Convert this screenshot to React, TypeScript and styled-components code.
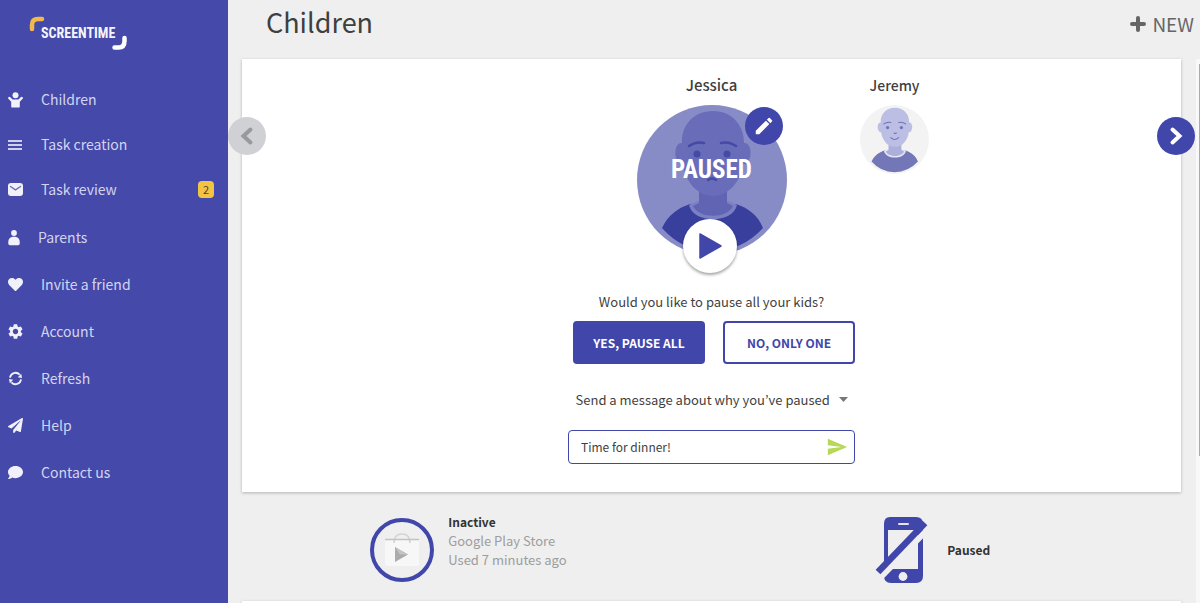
import React from 'react';
import styled, { createGlobalStyle } from 'styled-components';
import { MdSettings, MdEdit, MdSend } from 'react-icons/md';
import { FaHeart, FaPaperPlane, FaComment } from 'react-icons/fa';

const color = {
  brand: '#4146aa',
  sidebar: '#4549aa',
  page: '#efefef',
  text: '#3f3f3f',
  muted: '#9d9d9d',
};

const displayFont = '"Roboto Condensed", "Noto Sans CJK KR", sans-serif';

const GlobalStyle = createGlobalStyle`
  *, *::before, *::after { box-sizing: border-box; }
  body {
    margin: 0;
    background: ${color.page};
    color: ${color.text};
    font-family: "Noto Sans CJK KR", "Noto Sans", sans-serif;
    font-size: 13px;
    line-height: 19px;
  }
  button, input, select { font: inherit; color: inherit; margin: 0; }
  button { cursor: pointer; }
  svg { display: block; }
`;

const Shell = styled.div`
  display: flex;
  height: 100vh;
  overflow: hidden;
`;

/* Sidebar */

const Sidebar = styled.aside`
  flex: 0 0 228px;
  background: ${color.sidebar};
  color: #d3d5f0;
`;

const Brand = styled.a`
  display: flex;
  align-items: center;
  position: relative;
  width: 98px;
  height: 34px;
  margin: 16px 0 27px 29px;
  padding-left: 12px;
  color: #f4f4fc;
  font-family: ${displayFont};
  font-size: 14px;
  font-weight: 700;
  text-decoration: none;
`;

const BrandCorners = styled.svg`
  position: absolute;
  inset: 0;
`;

const NavList = styled.ul<{ $row: number }>`
  margin: 0 0 2px;
  padding: 0;
  list-style: none;
  li { height: ${(p) => p.$row}px; }
`;

const NavLink = styled.a`
  display: flex;
  align-items: center;
  gap: 18px;
  height: 100%;
  padding: 0 14px 0 8px;
  color: inherit;
  font-size: 14px;
  text-decoration: none;
  svg { flex: none; color: #f1f1fb; }
`;

const Badge = styled.span`
  margin-left: auto;
  width: 16px;
  height: 17px;
  border-radius: 4px;
  background: #f2c443;
  color: #4c4427;
  font-size: 11px;
  line-height: 17px;
  text-align: center;
`;

/* Main column */

const Main = styled.main`
  flex: 1;
  min-width: 0;
  display: flex;
  flex-direction: column;
`;

const Header = styled.header`
  flex: none;
  display: flex;
  align-items: flex-start;
  justify-content: space-between;
  height: 59px;
  padding: 4px 6px 0 38px;
`;

const Title = styled.h1`
  margin: 0;
  font-size: 27px;
  font-weight: 400;
  line-height: 36px;
`;

const NewButton = styled.button`
  display: flex;
  align-items: center;
  gap: 6px;
  padding: 0;
  border: 0;
  background: none;
  color: #666;
  font-size: 19px;
  line-height: 40px;
`;

const Scroller = styled.div`
  flex: 1;
  display: flex;
  min-height: 0;
`;

const Content = styled.div`
  flex: 1;
  min-width: 0;
  padding: 0 15px 0 14px;
`;

const Track = styled.div`
  flex: 0 0 4px;
  display: flex;
  justify-content: flex-end;
  background: #f8f8f8;
`;

const Thumb = styled.div`
  width: 1px;
  height: 72%;
  margin-top: 5px;
  background: #aaa;
`;

const Card = styled.section`
  position: relative;
  min-height: 120px;
  background: #fff;
  box-shadow: 0 1px 3px rgba(0, 0, 0, 0.25);
`;

const ChildCard = styled(Card)`
  display: flex;
  flex-direction: column;
  align-items: center;
  padding: 16px 0 28px;
`;

const ArrowButton = styled.button<{ $side: 'left' | 'right' }>`
  position: absolute;
  top: 58px;
  ${(p) => p.$side}: -14px;
  display: grid;
  place-items: center;
  width: 38px;
  height: 38px;
  padding: 0;
  border: 0;
  border-radius: 50%;
  background: ${color.brand};
  color: #fff;
  &:disabled { background: #cfd1d4; color: #97999c; }
`;

const Slides = styled.div`
  display: grid;
  grid-template-columns: repeat(3, 183px);
  justify-content: center;
  height: 200px;
`;

const Slide = styled.div<{ $column: number }>`
  grid-column: ${(p) => p.$column};
  display: flex;
  flex-direction: column;
  align-items: center;
`;

const ChildName = styled.h2<{ $active?: boolean }>`
  margin: 0 0 10px;
  font-size: ${(p) => (p.$active ? 15 : 14)}px;
  font-weight: 500;
  line-height: 20px;
`;

const AvatarFrame = styled.div<{ $size: number }>`
  position: relative;
  width: ${(p) => p.$size}px;
  height: ${(p) => p.$size}px;
`;

const PausedLabel = styled.span`
  position: absolute;
  inset: 50px 0 auto;
  color: #fff;
  font-family: ${displayFont};
  font-size: 25px;
  font-weight: 700;
  line-height: 30px;
  text-align: center;
`;

const EditButton = styled.button`
  position: absolute;
  top: 2px;
  right: 4px;
  display: grid;
  place-items: center;
  width: 38px;
  height: 38px;
  padding: 0;
  border: 0;
  border-radius: 50%;
  background: ${color.brand};
  color: #fff;
`;

const PlayButton = styled.button`
  position: absolute;
  left: 46px;
  top: 114px;
  display: grid;
  place-items: center;
  width: 54px;
  height: 54px;
  padding: 0;
  border: 0;
  border-radius: 50%;
  background: #fff;
  color: ${color.brand};
  box-shadow: 0 2px 3px rgba(0, 0, 0, 0.35);
`;

const PausePanel = styled.form`
  display: flex;
  flex-direction: column;
  align-items: center;
  width: 287px;
  margin-top: 17px;
`;

const Question = styled.p`
  margin: 0 0 10px;
`;

const Choices = styled.div`
  align-self: flex-end;
  display: flex;
  gap: 18px;
`;

const ChoiceButton = styled.button<{ $primary?: boolean }>`
  width: 132px;
  height: 43px;
  padding: 0;
  border: 2px solid ${color.brand};
  border-radius: 4px;
  background: ${(p) => (p.$primary ? color.brand : '#fff')};
  color: ${(p) => (p.$primary ? '#fff' : color.brand)};
  font-size: 12px;
  font-weight: 700;
`;

const ReasonField = styled.label`
  display: flex;
  align-items: center;
  gap: 8px;
  margin: 25px 0 21px;
  svg { color: #777; }
`;

const ReasonSelect = styled.select`
  height: 20px;
  padding: 0;
  border: 0;
  background: none;
  appearance: none;
`;

const MessageBox = styled.div`
  display: flex;
  align-items: center;
  width: 100%;
  height: 34px;
  padding: 0 6px 0 12px;
  border: 1px solid ${color.brand};
  border-radius: 4px;
`;

const MessageInput = styled.input`
  flex: 1;
  min-width: 0;
  height: 20px;
  padding: 0 0 2px;
  border: 0;
  outline: 0;
  background: none;
  font-size: 12px;
`;

const SendButton = styled.button`
  padding: 0;
  border: 0;
  background: none;
  color: #b5d957;
`;

/* Status strip */

const StatusRow = styled.section`
  display: grid;
  grid-template-columns: 1fr 1fr;
  justify-items: center;
  height: 109px;
  padding: 20px 18px 15px 0;
`;

const Status = styled.div<{ $gap: number }>`
  display: flex;
  align-items: center;
  gap: ${(p) => p.$gap}px;
`;

const AppRing = styled.div`
  display: grid;
  place-items: center;
  width: 64px;
  height: 64px;
  border: 4px solid ${color.brand};
  border-radius: 50%;
`;

const StatusText = styled.div`
  min-width: 126px;
  padding-bottom: 18px;
  color: ${color.muted};
  p { margin: 0; }
`;

const StatusLabel = styled.strong`
  display: block;
  color: #333;
  font-size: 12px;
`;

/* Drawings */

type Palette = {
  back: string; skin: string; neck: string; shirt: string; collar: string; line: string;
};

const pausedPalette: Palette = {
  back: '#888cc6', skin: '#686cb9', neck: '#6064b3', shirt: '#393f9d', collar: '#7b7fc3', line: '#444aa5',
};
const calmPalette: Palette = {
  back: '#f3f3f3', skin: '#bcbee4', neck: '#acafdb', shirt: '#7377b7', collar: '#e3e4f4', line: '#6f74b5',
};

const Portrait = ({ size, palette, smiling }: { size: number; palette: Palette; smiling?: boolean }) => (
  <svg width={size} height={size} viewBox="0 0 150 150" aria-hidden="true">
    <circle cx="75" cy="75" r="75" fill={palette.back} />
    <path d="M25 123C31 110 41 103 53 99Q76 108 99 99C111 103 121 110 126 123Q105 146 75 146T25 123Z" fill={palette.shirt} />
    <path d="M52 100C56 119 96 119 100 100L91 96H61Z" fill={palette.collar} />
    <path d="M62 84H90V98L96 101C90 114 62 114 56 101L62 98Z" fill={palette.neck} />
    <path d="M76 6C96 6 107 21 107 38C114 37 115 50 112 55Q110 60 106 59C104 76 92 91 76 91S48 76 46 59Q42 60 40 55C37 50 38 37 45 38C44 21 56 6 76 6Z" fill={palette.skin} />
    <g fill="none" stroke={palette.line} strokeWidth="2.5" strokeLinecap="round">
      <path d="M52 41Q59 36 67 38M84 38Q92 36 99 41" />
      {smiling ? (
        <path d="M67 71Q75 79 84 71M74 61Q76 63 79 61" />
      ) : (
        <path d="M71 75Q75 72 79 75" />
      )}
    </g>
    <circle cx="60" cy="49" r="3.5" fill={palette.line} />
    <circle cx="90" cy="49" r="3.5" fill={palette.line} />
  </svg>
);

const ChildIcon = () => (
  <svg width="15" height="16" viewBox="0 0 15 16" fill="currentColor" aria-hidden="true">
    <circle cx="7.5" cy="3.2" r="3" />
    <path d="M.4 5.2Q1.4 4.3 2.3 5.3L4.6 7.4H10.4L12.7 5.3Q13.6 4.3 14.6 5.2T14.4 7L11.8 9.7V14.4Q11.8 15.6 10.6 15.6H4.4Q3.2 15.6 3.2 14.4V9.7L.6 7Q-.3 6 .4 5.2Z" />
  </svg>
);

const BarsIcon = () => (
  <svg width="15" height="12" viewBox="0 0 15 12" fill="currentColor" aria-hidden="true">
    <path d="M0 1H14V3H0ZM0 5H14V7H0ZM0 9H14V11H0Z" opacity=".8" />
  </svg>
);

const MailIcon = () => (
  <svg width="15" height="13" viewBox="0 0 15 13" aria-hidden="true">
    <rect width="15" height="13" rx="3" fill="currentColor" />
    <path d="M2.5 3.5L7.5 6.8L12.5 3.5" fill="none" stroke="#6d70b4" strokeWidth="1.4" strokeLinecap="round" />
  </svg>
);

const ParentIcon = () => (
  <svg width="12" height="16" viewBox="0 0 12 16" fill="currentColor" aria-hidden="true">
    <circle cx="6" cy="3" r="2.9" />
    <path d="M.3 12C.3 8.6 2.6 6.8 6 6.8S11.7 8.6 11.7 12V13.6Q11.7 15.2 10.2 15.2H1.8Q.3 15.2 .3 13.6Z" />
  </svg>
);

const SyncIcon = () => (
  <svg width="15" height="15" viewBox="0 0 15 15" aria-hidden="true">
    <path d="M2 6.6A5.5 5.5 0 0 1 11.6 3.7M13 8.4A5.5 5.5 0 0 1 3.4 11.3" fill="none" stroke="currentColor" strokeWidth="1.8" />
    <path d="M14 7L9.8 6.2L13.2 2.8ZM1 8L5.2 8.8L1.8 12.2Z" fill="currentColor" />
  </svg>
);

const PlusIcon = () => (
  <svg width="16" height="16" viewBox="0 0 16 16" aria-hidden="true">
    <path d="M8 2V14M2 8H14" stroke="currentColor" strokeWidth="4" strokeLinecap="round" />
  </svg>
);

const Chevron = ({ flip }: { flip?: boolean }) => (
  <svg width="16" height="20" viewBox="0 0 16 20" fill="none" stroke="currentColor" strokeWidth="4" strokeLinecap="round" aria-hidden="true">
    <path d={flip ? 'M11.5 3.5L4.5 10L11.5 16.5' : 'M4.5 3.5L11.5 10L4.5 16.5'} />
  </svg>
);

const StoreIcon = () => (
  <svg width="36" height="36" viewBox="0 0 36 36" aria-hidden="true">
    <path d="M1 8H35V32Q35 34 33 34H3Q1 34 1 32Z" fill="#f7f7f7" />
    <path d="M10 11Q10 2 18 2T26 11" fill="none" stroke="#d4d4d4" strokeWidth="1.6" />
    <path d="M1 7.5H35" stroke="#c2c2c2" strokeWidth="1.6" />
    <path d="M11 15L24 22.5L11 30Z" fill="#ababab" />
    <path d="M11 15L24 22.5H16Z" fill="#c4c4c4" />
  </svg>
);

const PhoneOffIcon = () => (
  <svg width="54" height="66" viewBox="0 0 54 66" aria-hidden="true">
    <path fill={color.brand} fillRule="evenodd" d="M15 0H41Q48 0 48 7V59Q48 66 41 66H16Q9 66 9 59V7Q9 0 15 0ZM13 13V52H43V13Z" />
    <rect x="23" y="6" width="11" height="2" rx="1" fill="#e2e3f5" />
    <circle cx="28" cy="59.5" r="4.4" fill={color.page} />
    <path d="M56 9L4 62" stroke={color.page} strokeWidth="6" />
    <path d="M50 6L3 55" stroke={color.brand} strokeWidth="6.5" />
  </svg>
);

type LinkItem = { label: string; icon: React.ReactNode; count?: number };

const primaryLinks: LinkItem[] = [
  { label: 'Children', icon: <ChildIcon /> },
  { label: 'Task creation', icon: <BarsIcon /> },
  { label: 'Task review', icon: <MailIcon />, count: 2 },
];

const secondaryLinks: LinkItem[] = [
  { label: 'Parents', icon: <ParentIcon /> },
  { label: 'Invite a friend', icon: <FaHeart size={15} /> },
  { label: 'Account', icon: <MdSettings size={15} viewBox="2 2 20 20" /> },
  { label: 'Refresh', icon: <SyncIcon /> },
  { label: 'Help', icon: <FaPaperPlane size={15} /> },
  { label: 'Contact us', icon: <FaComment size={15} /> },
];

const Nav = ({ items, row }: { items: LinkItem[]; row: number }) => (
  <NavList $row={row}>
    {items.map((item) => (
      <li key={item.label}>
        <NavLink href="#">
          {item.icon}
          {item.label}
          {item.count && <Badge>{item.count}</Badge>}
        </NavLink>
      </li>
    ))}
  </NavList>
);

export default function App() {
  return (
    <Shell>
      <GlobalStyle />
      <Sidebar>
        <Brand href="#">
          <BrandCorners width="98" height="34" viewBox="0 0 98 34" fill="none" strokeWidth="4.5" strokeLinecap="round" aria-hidden="true">
            <path d="M3 13V9Q3 3 9 3H13" stroke="#efb94c" />
            <path d="M95.5 22V25Q95.5 31.5 89.5 31.5H85.5" stroke="#fff" />
          </BrandCorners>
          SCREENTIME
        </Brand>
        <nav>
          <Nav items={primaryLinks} row={45} />
          <Nav items={secondaryLinks} row={47} />
        </nav>
      </Sidebar>
      <Main>
        <Header>
          <Title>Children</Title>
          <NewButton type="button"><PlusIcon />NEW</NewButton>
        </Header>
        <Scroller>
          <Content>
            <ChildCard>
              <ArrowButton type="button" $side="left" disabled aria-label="Previous child"><Chevron flip /></ArrowButton>
              <ArrowButton type="button" $side="right" aria-label="Next child"><Chevron /></ArrowButton>
              <Slides>
                <Slide $column={2}>
                  <ChildName $active>Jessica</ChildName>
                  <AvatarFrame $size={150}>
                    <Portrait size={150} palette={pausedPalette} />
                    <PausedLabel>PAUSED</PausedLabel>
                    <EditButton type="button" aria-label="Edit Jessica"><MdEdit size={22} /></EditButton>
                    <PlayButton type="button" aria-label="Resume Jessica">
                      <svg width="24" height="28" viewBox="0 0 24 28" aria-hidden="true">
                        <path d="M2 2L23 14L2 26Z" fill="currentColor" stroke="currentColor" strokeWidth="1.5" strokeLinejoin="round" />
                      </svg>
                    </PlayButton>
                  </AvatarFrame>
                </Slide>
                <Slide $column={3}>
                  <ChildName>Jeremy</ChildName>
                  <AvatarFrame $size={69}>
                    <Portrait size={69} palette={calmPalette} smiling />
                  </AvatarFrame>
                </Slide>
              </Slides>
              <PausePanel onSubmit={(e) => e.preventDefault()}>
                <Question>Would you like to pause all your kids?</Question>
                <Choices>
                  <ChoiceButton type="button" $primary>YES, PAUSE ALL</ChoiceButton>
                  <ChoiceButton type="button">NO, ONLY ONE</ChoiceButton>
                </Choices>
                <ReasonField>
                  <ReasonSelect aria-label="Message type">
                    <option>Send a message about why you’ve paused</option>
                  </ReasonSelect>
                  <svg width="9" height="5" viewBox="0 0 9 5" aria-hidden="true"><path d="M0 0H9L4.5 5Z" fill="currentColor" /></svg>
                </ReasonField>
                <MessageBox>
                  <MessageInput aria-label="Message" defaultValue="Time for dinner!" />
                  <SendButton type="submit" aria-label="Send message"><MdSend size={22} /></SendButton>
                </MessageBox>
              </PausePanel>
            </ChildCard>
            <StatusRow>
              <Status $gap={14}>
                <AppRing><StoreIcon /></AppRing>
                <StatusText>
                  <StatusLabel>Inactive</StatusLabel>
                  <p>Google Play Store</p>
                  <p>Used 7 minutes ago</p>
                </StatusText>
              </Status>
              <Status $gap={18}>
                <PhoneOffIcon />
                <StatusLabel>Paused</StatusLabel>
              </Status>
            </StatusRow>
            <Card />
          </Content>
          <Track><Thumb /></Track>
        </Scroller>
      </Main>
    </Shell>
  );
}
